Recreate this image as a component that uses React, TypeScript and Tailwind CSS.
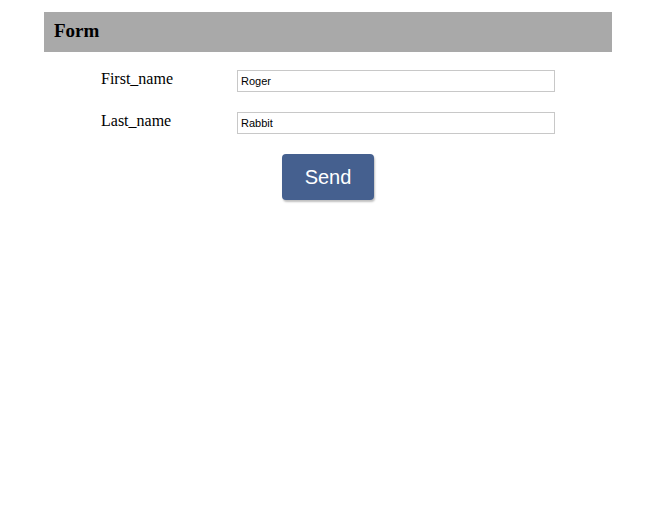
export default function App() {
  return (
    <div className="min-h-screen w-full bg-white pt-[12px]">
      <div className="ml-[44px] w-[568px]">
        <header className="h-[40px] bg-[#a9a9a9] flex items-center pl-[10px] pb-[3px]">
          <h1 className="font-['Liberation_Serif',serif] font-bold text-[19px] text-black leading-none">Form</h1>
        </header>

        <form className="pt-[18px]" onSubmit={(e) => e.preventDefault()}>
          <div className="flex items-start ml-[57px] h-[42px]">
            <label className="w-[136px] font-['Liberation_Serif',serif] text-[16px] leading-[18px] text-black">First_name</label>
            <input
              defaultValue="Roger"
              className="w-[318px] h-[22px] border border-[#c8c8c8] px-[3px] font-['Liberation_Sans',Arial,sans-serif] text-[11px] text-black outline-none"
            />
          </div>
          <div className="flex items-start ml-[57px] h-[42px]">
            <label className="w-[136px] font-['Liberation_Serif',serif] text-[16px] leading-[18px] text-black">Last_name</label>
            <input
              defaultValue="Rabbit"
              className="w-[318px] h-[22px] border border-[#c8c8c8] px-[3px] font-['Liberation_Sans',Arial,sans-serif] text-[11px] text-black outline-none"
            />
          </div>
          <div className="flex justify-center">
            <button
              type="submit"
              className="w-[92px] h-[46px] rounded-[4px] bg-[#45608f] text-white font-['Liberation_Sans',Arial,sans-serif] text-[20px] shadow-[1px_2px_2px_rgba(0,0,0,0.25)]"
            >
              Send
            </button>
          </div>
        </form>
      </div>
    </div>
  );
}
